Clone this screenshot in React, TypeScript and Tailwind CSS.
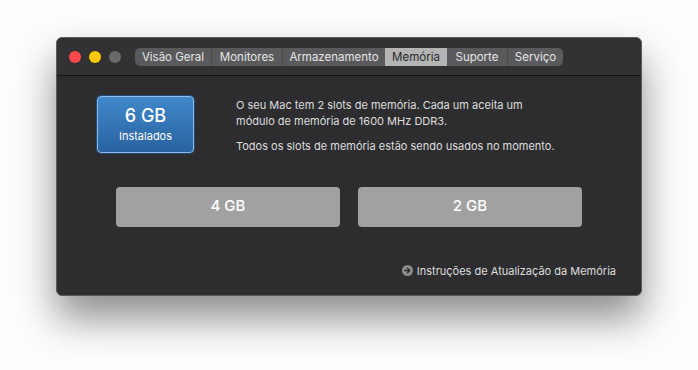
import React from 'react'

const tabs = ['Visão Geral', 'Monitores', 'Armazenamento', 'Memória', 'Suporte', 'Serviço']
const tabWidths = ['w-[76px]', 'w-[71px]', 'w-[103px]', 'w-[62px]', 'w-[60px]', 'w-[56px]']

export default function App() {
  return (
    <div
      className="w-[698px] h-[370px] bg-[#fdfdfd] pt-[37px] pl-[56px] overflow-hidden"
      style={{ fontFamily: 'Inter, "Noto Sans", sans-serif' }}
    >
      <div className="w-[586px] h-[259px] rounded-[6px] border border-[#5c5c5c] bg-[#2d2d2f] shadow-[0_22px_40px_rgba(0,0,0,0.45)] overflow-hidden flex flex-col">
        {/* Title bar */}
        <div className="h-[38px] shrink-0 flex items-center pl-[12px] bg-[#323234] border-b border-[#141414]">
          <div className="flex gap-[8px]">
            <span className="w-[12px] h-[12px] rounded-full bg-[#fe4a4c]" />
            <span className="w-[12px] h-[12px] rounded-full bg-[#ffc800]" />
            <span className="w-[12px] h-[12px] rounded-full bg-[#6a6a6a]" />
          </div>
          <div className="ml-[14px] flex h-[18px] rounded-[5px] bg-[#5a5a5c] overflow-hidden text-[11.5px] leading-[18px]">
            {tabs.map((t, i) => (
              <div
                key={t}
                className={`${tabWidths[i]} text-center ${
                  t === 'Memória'
                    ? 'bg-[#b4b4b4] text-[#2a2a2a]'
                    : 'text-[#e6e6e6]'
                } ${i > 0 && t !== 'Memória' && tabs[i - 1] !== 'Memória' ? 'border-l border-[#49494b]' : ''}`}
              >
                {t}
              </div>
            ))}
          </div>
        </div>

        {/* Body */}
        <div className="flex-1 flex flex-col">
          <div className="flex pt-[20px] pl-[40px]">
            <div className="w-[97px] h-[57px] rounded-[4px] border border-[#8fbbe6] bg-gradient-to-b from-[#4089cb] to-[#2a62a0] flex flex-col items-center justify-center text-white shadow-[0_0_0_1px_#1f4a7a]">
              <div className="text-[18px] leading-[22px] font-medium">6 GB</div>
              <div className="text-[11px] leading-[16px] mt-[1px]">Instalados</div>
            </div>
            <div className="ml-[42px] pt-[2px] text-[11px] leading-[15.5px] text-[#dedede]">
              <p>O seu Mac tem 2 slots de memória. Cada um aceita um</p>
              <p>módulo de memória de 1600 MHz DDR3.</p>
              <p className="mt-[10px]">Todos os slots de memória estão sendo usados no momento.</p>
            </div>
          </div>

          <div className="flex gap-[18px] pl-[59px] mt-[32px]">
            <div className="w-[224px] h-[40px] rounded-[4px] bg-[#a1a1a1] flex items-center justify-center text-white text-[15px] font-medium">
              4 GB
            </div>
            <div className="w-[224px] h-[40px] rounded-[4px] bg-[#a1a1a1] flex items-center justify-center text-white text-[15px] font-medium">
              2 GB
            </div>
          </div>

          <div className="flex items-center justify-end pr-[25px] mt-[36px] text-[11px] text-[#dedede]">
            <svg width="11" height="11" viewBox="0 0 12 12" className="mr-[4px]">
              <circle cx="6" cy="6" r="6" fill="#8e8e8e" />
              <path d="M3 6h5M6 3.5 8.5 6 6 8.5" stroke="#2d2d2f" strokeWidth="1.6" fill="none" strokeLinecap="round" strokeLinejoin="round" />
            </svg>
            <span>Instruções de Atualização da Memória</span>
          </div>
        </div>
      </div>
    </div>
  )
}
